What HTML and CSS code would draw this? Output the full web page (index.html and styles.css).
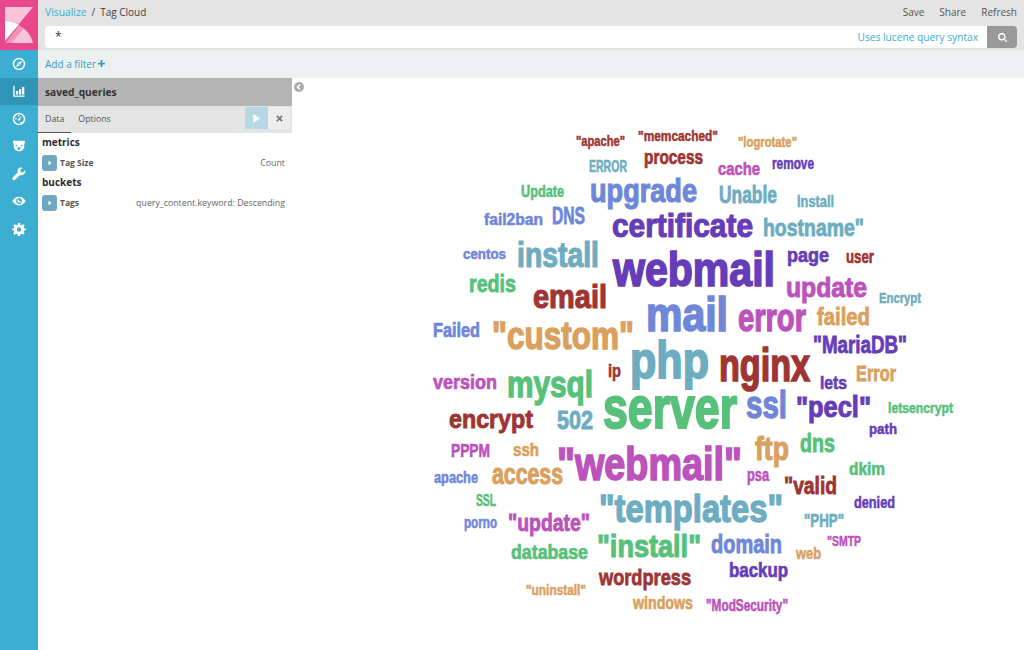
FILE: index.html
```html
<!DOCTYPE html>
<html lang="en">
<head>
<meta charset="utf-8">
<title>Tag Cloud</title>
<link rel="stylesheet" href="styles.css">
</head>
<body>
<nav class="nav">
  <div class="logo">
    <svg width="38" height="50" viewBox="0 0 38 50">
      <path class="lg1" d="M5 7H33L19 24C15 22 10 21 5 21Z"/>
      <path class="lg0" d="M5 21C10 21 15 22 19 24.5L5 41Z"/>
      <path class="lg1" d="M19 25.5C26 29 31 35 33 43H11Z"/>
      <path class="lg2" d="M19 25.5C20.700 26.300 22.200 27.400 23.500 28.500L11.500 43H5.500Z"/>
    </svg>
  </div>
  <a class="nav-item"><svg viewBox="0 0 16 16"><circle class="ol" cx="8" cy="8" r="6.300"/><path class="fl" d="M11.500 4.500 9.400 9.400 4.500 11.500 6.600 6.600ZM8 7a1 1 0 1 0 0 2 1 1 0 0 0 0-2Z"/></svg></a>
  <a class="nav-item on"><svg viewBox="0 0 16 16"><path class="fl" d="M1.500 2H3V13H14.500V14.500H1.500ZM4.500 8H7V12H4.500ZM8 6H10.500V12H8ZM11.500 3.500H14V12H11.500Z"/></svg></a>
  <a class="nav-item"><svg viewBox="0 0 16 16"><circle class="ol" cx="8" cy="8" r="6.300"/><path class="fl" d="M6.500 8.500 11 4.500 9 9.500A1.600 1.600 0 0 1 6.500 8.500ZM3.500 7.500a1 1 0 1 0 2 0 1 1 0 0 0-2 0ZM6.500 4a1 1 0 1 0 2 0 1 1 0 0 0-2 0ZM9.500 12a1 1 0 1 0 2 0 1 1 0 0 0-2 0Z"/></svg></a>
  <a class="nav-item"><svg viewBox="0 0 16 16"><path class="fl" d="M1 3.500A1.800 1.800 0 0 1 3.800 2H12.200A1.800 1.800 0 0 1 15 3.500C15 4.500 14.500 5 14 5.300V8.500C14 12 11 14 8 14S2 12 2 8.500V5.300C1.500 5 1 4.500 1 3.500ZM5 6.500a1 1 0 1 0 0 2 1 1 0 0 0 0-2ZM11 6.500a1 1 0 1 0 0 2 1 1 0 0 0 0-2ZM6 10c0 1.200 1 2.500 2 2.500s2-1.300 2-2.500C10 9.200 6 9.200 6 10Z"/></svg></a>
  <a class="nav-item"><svg viewBox="0 0 16 16"><path class="fl" d="M15 3.800 12.400 6.300 10 5.700 9.500 3.500 12 1C10 .3 8 .9 7 2.300 6.200 3.500 6 5 6.600 6.400L.9 12.100C.2 12.900.2 14 .9 14.700 1.700 15.500 2.800 15.400 3.500 14.700L9.300 9C11 9.700 13 9.200 14.200 7.800 15.200 6.700 15.500 5.200 15 3.800Z"/></svg></a>
  <a class="nav-item"><svg viewBox="0 0 16 16"><path class="fl" d="M8 3C4.500 3 1.800 5.300.5 8 1.800 10.700 4.500 13 8 13S14.200 10.700 15.500 8C14.200 5.300 11.500 3 8 3ZM8 4.700A3.300 3.300 0 1 1 8 11.300 3.300 3.300 0 0 1 8 4.700ZM8 6A2 2 0 1 0 10 8H8Z"/></svg></a>
  <a class="nav-item"><svg viewBox="0 0 16 16"><path class="fl" fill-rule="evenodd" d="M6.800 1H9.200L9.600 3 11.200 3.700 12.900 2.500 14.500 4.100 13.300 5.800 14 7.400 16 7.800V9.200L14 9.600 13.300 11.200 14.500 12.900 12.900 14.500 11.200 13.300 9.600 14 9.200 16H6.800L6.400 14 4.800 13.300 3.100 14.500 1.500 12.900 2.700 11.200 2 9.600 0 9.200V7.800L2 7.400 2.700 5.800 1.500 4.100 3.100 2.500 4.800 3.700 6.400 3ZM8 6A2.500 2.500 0 1 0 8 11 2.500 2.500 0 0 0 8 6Z"/></svg></a>
</nav>
<div class="main">
  <header class="top">
    <div class="crumbs">
      <div class="path"><a class="link">Visualize</a><span class="sep">/</span><span>Tag Cloud</span></div>
      <div class="actions"><span>Save</span><span>Share</span><span>Refresh</span></div>
    </div>
    <div class="query">
      <div class="input"><span class="star">*</span><a class="link">Uses lucene query syntax</a></div>
      <div class="go"><svg viewBox="0 0 16 16"><path class="fl" fill-rule="evenodd" d="M7 1.500A5.500 5.500 0 1 1 7 12.500 5.500 5.500 0 0 1 7 1.500ZM7 3.500A3.500 3.500 0 1 0 7 10.500 3.500 3.500 0 0 0 7 3.500ZM10.500 11.800 11.800 10.500 15 13.700 13.700 15Z"/></svg></div>
    </div>
  </header>
  <div class="filters"><a class="link">Add a filter <svg class="plus" viewBox="0 0 8 8"><path d="M3 0H5V3H8V5H5V8H3V5H0V3H3Z"/></svg></a></div>
  <div class="work">
    <aside class="panel">
      <div class="title">saved_queries</div>
      <div class="tabs">
        <span class="tab active">Data</span><span class="tab">Options</span>
        <div class="btns">
          <span class="play"><svg viewBox="0 0 10 10"><path class="fl" d="M1.500 0 9 5 1.500 10Z"/></svg></span>
          <span class="close"><svg viewBox="0 0 8 8"><path d="M1 1 7 7M7 1 1 7"/></svg></span>
        </div>
      </div>
      <section class="group">
        <h3>metrics</h3>
        <div class="row"><span class="toggle"><svg viewBox="0 0 6 8"><path class="fl" d="M1.500 1.500 4.500 4 1.500 6.500Z"/></svg></span><b>Tag Size</b><span class="val">Count</span></div>
        <h3>buckets</h3>
        <div class="row"><span class="toggle"><svg viewBox="0 0 6 8"><path class="fl" d="M1.500 1.500 4.500 4 1.500 6.500Z"/></svg></span><b>Tags</b><span class="val">query_content.keyword: Descending</span></div>
      </section>
    </aside>
    <div class="vis">
      <svg class="collapse" viewBox="0 0 10 10"><circle cx="5" cy="5" r="5"/><path d="M6 2.500 3.500 5 6 7.500"/></svg>
      <svg class="cloud" viewBox="292 78 732 572">
        <g class="red">
          <text lengthAdjust="spacingAndGlyphs" x="576" y="146" textLength="49" font-size="14">"apache"</text>
          <text lengthAdjust="spacingAndGlyphs" x="638" y="141" textLength="80" font-size="14">"memcached"</text>
          <text lengthAdjust="spacingAndGlyphs" x="644" y="164" textLength="59" font-size="20">process</text>
          <text lengthAdjust="spacingAndGlyphs" x="533" y="308" textLength="74" font-size="34">email</text>
          <text lengthAdjust="spacingAndGlyphs" x="719" y="381" textLength="91" font-size="47">nginx</text>
          <text lengthAdjust="spacingAndGlyphs" x="608" y="377" textLength="13" font-size="18">ip</text>
          <text lengthAdjust="spacingAndGlyphs" x="449" y="428" textLength="84" font-size="26">encrypt</text>
          <text lengthAdjust="spacingAndGlyphs" x="599" y="585" textLength="92" font-size="22">wordpress</text>
          <text lengthAdjust="spacingAndGlyphs" x="846" y="263" textLength="28" font-size="18">user</text>
          <text lengthAdjust="spacingAndGlyphs" x="784" y="494" textLength="53" font-size="24">"valid</text>
        </g>
        <g class="teal">
          <text lengthAdjust="spacingAndGlyphs" x="589" y="172" textLength="38" font-size="17">ERROR</text>
          <text lengthAdjust="spacingAndGlyphs" x="517" y="267" textLength="82" font-size="35">install</text>
          <text lengthAdjust="spacingAndGlyphs" x="630" y="378" textLength="79" font-size="52">php</text>
          <text lengthAdjust="spacingAndGlyphs" x="557" y="429" textLength="36" font-size="25">502</text>
          <text lengthAdjust="spacingAndGlyphs" x="599" y="522" textLength="184" font-size="39">"templates"</text>
          <text lengthAdjust="spacingAndGlyphs" x="719" y="203" textLength="58" font-size="23">Unable</text>
          <text lengthAdjust="spacingAndGlyphs" x="797" y="207" textLength="37" font-size="16">Install</text>
          <text lengthAdjust="spacingAndGlyphs" x="763" y="236" textLength="101" font-size="24">hostname"</text>
          <text lengthAdjust="spacingAndGlyphs" x="879" y="303" textLength="42" font-size="14">Encrypt</text>
          <text lengthAdjust="spacingAndGlyphs" x="804" y="527" textLength="40" font-size="18">"PHP"</text>
        </g>
        <g class="green">
          <text lengthAdjust="spacingAndGlyphs" x="521" y="197" textLength="43" font-size="16">Update</text>
          <text lengthAdjust="spacingAndGlyphs" x="469" y="292" textLength="47" font-size="23">redis</text>
          <text lengthAdjust="spacingAndGlyphs" x="507" y="397" textLength="86" font-size="37">mysql</text>
          <text lengthAdjust="spacingAndGlyphs" x="603" y="428" textLength="134" font-size="60">server</text>
          <text lengthAdjust="spacingAndGlyphs" x="476" y="506" textLength="20" font-size="17">SSL</text>
          <text lengthAdjust="spacingAndGlyphs" x="511" y="559" textLength="77" font-size="20">database</text>
          <text lengthAdjust="spacingAndGlyphs" x="597" y="557" textLength="104" font-size="32">"install"</text>
          <text lengthAdjust="spacingAndGlyphs" x="888" y="413" textLength="65" font-size="15">letsencrypt</text>
          <text lengthAdjust="spacingAndGlyphs" x="800" y="452" textLength="35" font-size="25">dns</text>
          <text lengthAdjust="spacingAndGlyphs" x="849" y="475" textLength="36" font-size="19">dkim</text>
        </g>
        <g class="blue">
          <text lengthAdjust="spacingAndGlyphs" x="590" y="202" textLength="107" font-size="33">upgrade</text>
          <text lengthAdjust="spacingAndGlyphs" x="484" y="225" textLength="59" font-size="17">fail2ban</text>
          <text lengthAdjust="spacingAndGlyphs" x="552" y="224" textLength="33" font-size="24">DNS</text>
          <text lengthAdjust="spacingAndGlyphs" x="463" y="259" textLength="43" font-size="15">centos</text>
          <text lengthAdjust="spacingAndGlyphs" x="646" y="331" textLength="82" font-size="48">mail</text>
          <text lengthAdjust="spacingAndGlyphs" x="433" y="337" textLength="47" font-size="21">Failed</text>
          <text lengthAdjust="spacingAndGlyphs" x="746" y="418" textLength="41" font-size="38">ssl</text>
          <text lengthAdjust="spacingAndGlyphs" x="434" y="483" textLength="44" font-size="16">apache</text>
          <text lengthAdjust="spacingAndGlyphs" x="464" y="528" textLength="33" font-size="16">porno</text>
          <text lengthAdjust="spacingAndGlyphs" x="711" y="553" textLength="71" font-size="25">domain</text>
        </g>
        <g class="violet">
          <text lengthAdjust="spacingAndGlyphs" x="612" y="237" textLength="141" font-size="33">certificate</text>
          <text lengthAdjust="spacingAndGlyphs" x="613" y="286" textLength="162" font-size="49">webmail</text>
          <text lengthAdjust="spacingAndGlyphs" x="772" y="169" textLength="42" font-size="17">remove</text>
          <text lengthAdjust="spacingAndGlyphs" x="787" y="262" textLength="42" font-size="21">page</text>
          <text lengthAdjust="spacingAndGlyphs" x="813" y="353" textLength="94" font-size="24">"MariaDB"</text>
          <text lengthAdjust="spacingAndGlyphs" x="820" y="389" textLength="27" font-size="19">lets</text>
          <text lengthAdjust="spacingAndGlyphs" x="796" y="417" textLength="75" font-size="29">"pecl"</text>
          <text lengthAdjust="spacingAndGlyphs" x="869" y="434" textLength="28" font-size="15">path</text>
          <text lengthAdjust="spacingAndGlyphs" x="854" y="508" textLength="41" font-size="16">denied</text>
          <text lengthAdjust="spacingAndGlyphs" x="729" y="577" textLength="59" font-size="20">backup</text>
        </g>
        <g class="pink">
          <text lengthAdjust="spacingAndGlyphs" x="718" y="175" textLength="42" font-size="19">cache</text>
          <text lengthAdjust="spacingAndGlyphs" x="786" y="297" textLength="81" font-size="28">update</text>
          <text lengthAdjust="spacingAndGlyphs" x="738" y="331" textLength="68" font-size="38">error</text>
          <text lengthAdjust="spacingAndGlyphs" x="433" y="389" textLength="64" font-size="20">version</text>
          <text lengthAdjust="spacingAndGlyphs" x="451" y="457" textLength="39" font-size="19">PPPM</text>
          <text lengthAdjust="spacingAndGlyphs" x="557" y="480" textLength="185" font-size="47">"webmail"</text>
          <text lengthAdjust="spacingAndGlyphs" x="747" y="481" textLength="22" font-size="18">psa</text>
          <text lengthAdjust="spacingAndGlyphs" x="508" y="531" textLength="82" font-size="23">"update"</text>
          <text lengthAdjust="spacingAndGlyphs" x="827" y="546" textLength="34" font-size="14">"SMTP</text>
          <text lengthAdjust="spacingAndGlyphs" x="706" y="611" textLength="82" font-size="16">"ModSecurity"</text>
        </g>
        <g class="orange">
          <text lengthAdjust="spacingAndGlyphs" x="738" y="147" textLength="59" font-size="14">"logrotate"</text>
          <text lengthAdjust="spacingAndGlyphs" x="492" y="349" textLength="142" font-size="39">"custom"</text>
          <text lengthAdjust="spacingAndGlyphs" x="817" y="325" textLength="53" font-size="23">failed</text>
          <text lengthAdjust="spacingAndGlyphs" x="856" y="381" textLength="40" font-size="22">Error</text>
          <text lengthAdjust="spacingAndGlyphs" x="513" y="456" textLength="26" font-size="19">ssh</text>
          <text lengthAdjust="spacingAndGlyphs" x="755" y="460" textLength="34" font-size="33">ftp</text>
          <text lengthAdjust="spacingAndGlyphs" x="492" y="484" textLength="71" font-size="29">access</text>
          <text lengthAdjust="spacingAndGlyphs" x="796" y="559" textLength="25" font-size="17">web</text>
          <text lengthAdjust="spacingAndGlyphs" x="526" y="595" textLength="60" font-size="14">"uninstall"</text>
          <text lengthAdjust="spacingAndGlyphs" x="633" y="609" textLength="60" font-size="18">windows</text>
        </g>
      </svg>
    </div>
  </div>
</div>
</body>
</html>
```
FILE: styles.css
```css
* { box-sizing: border-box; }
html, body { height: 100%; }
body {
  margin: 0;
  display: flex;
  height: 650px;
  overflow: hidden;
  background: #fff;
  color: #3f3f3f;
  font: 10px/1.2 "Open Sans", "Liberation Sans", sans-serif;
}
.fl { fill: #fff; }
.ol { fill: none; stroke: #fff; stroke-width: 1.7; }

.nav { width: 38px; flex: none; background: #3caed2; display: flex; flex-direction: column; }
.logo { height: 50px; background: #e8488b; }
.logo svg { display: block; }
.lg0 { fill: #fff; }
.lg1 { fill: #f9c3da; }
.lg2 { fill: #f391b9; }
.nav-item { height: 27.500px; display: flex; align-items: center; justify-content: center; }
.nav-item svg { width: 14px; height: 14px; display: block; }
.nav-item.on { background: #3094b6; }

.main { flex: 1; min-width: 0; display: flex; flex-direction: column; }
.top { height: 50px; background: #e4e4e4; padding: 0 7px; }
.crumbs { height: 26px; display: flex; justify-content: space-between; align-items: center; padding-bottom: 2px; }
.path { display: flex; gap: 5px; }
.path .link { font-size: 10.300px; }
.link { color: #3caed2; }
.actions { display: flex; gap: 15px; color: #555; }
.query { display: flex; height: 22px; }
.input {
  flex: 1;
  background: #fff;
  border-radius: 4px 0 0 4px;
  display: flex;
  justify-content: space-between;
  align-items: center;
  padding: 0 9px 0 10px;
}
.input .link { font-size: 10.200px; }
.star { color: #333; font-size: 12px; }
.go { width: 30px; background: #999; border-radius: 0 4px 4px 0; display: flex; align-items: center; justify-content: center; }
.go svg { width: 11px; height: 11px; }
.filters { height: 28px; background: #ecf0f1; padding: 0 7px 1px; display: flex; align-items: center; }
.filters .link { color: #3a9cbd; display: flex; align-items: center; gap: 2px; }
.plus { width: 7px; height: 7px; fill: #3a9cbd; }

.work { flex: 1; display: flex; min-height: 0; }
.panel { width: 254px; flex: none; }
.title { height: 28px; background: #b4b4b4; padding: 0 7px; display: flex; align-items: center; font-weight: 700; color: #333; font-size: 10.200px; }
.tabs { height: 27px; background: #e4e4e4; display: flex; align-items: center; font-size: 8.800px; }
.tab { height: 27px; padding: 0 7px; display: flex; align-items: center; color: #555; }
.tab.active { border-bottom: 1.500px solid #555; }
.btns { margin-left: auto; margin-right: 2px; display: flex; height: 22px; margin-top: -3px; }
.play { width: 23px; background: #b5d8e4; border-radius: 3px 0 0 3px; display: flex; align-items: center; justify-content: center; }
.play svg { width: 9px; height: 9px; }
.close { width: 22px; background: #ededed; border-radius: 0 3px 3px 0; display: flex; align-items: center; justify-content: center; }
.close svg { width: 7px; height: 7px; }
.close path { stroke: #777; stroke-width: 2; fill: none; }
.group { padding: 3px 7px 0 4px; }
.group h3 { margin: 0; height: 13px; font-size: 10px; line-height: 13px; font-weight: 700; color: #2d2d2d; }
.row { height: 27px; padding-top: 1px; display: flex; align-items: center; font-size: 8.800px; color: #666; }
.row b { color: #555; margin-left: 3px; font-size: 8.500px; }
.val { margin-left: auto; }
.toggle { width: 15px; height: 16px; background: #70a9bf; border-radius: 3px; display: flex; align-items: center; justify-content: center; }
.toggle svg { width: 6px; height: 8px; }

.vis { flex: 1; position: relative; }
.collapse { position: absolute; left: 2px; top: 4px; width: 10px; height: 10px; }
.collapse circle { fill: #aaa; }
.collapse path { fill: none; stroke: #fff; stroke-width: 1.600; }
.cloud { display: block; width: 732px; height: 572px; }
.cloud text {
  font-family: "Liberation Sans", Arial, sans-serif;
  font-weight: 700;
  stroke-width: .035em;
}
.red { fill: #9e3533; stroke: #9e3533; }
.teal { fill: #6eadc1; stroke: #6eadc1; }
.green { fill: #57c17b; stroke: #57c17b; }
.blue { fill: #6f87d8; stroke: #6f87d8; }
.violet { fill: #663db8; stroke: #663db8; }
.pink { fill: #bc52bc; stroke: #bc52bc; }
.orange { fill: #daa05d; stroke: #daa05d; }
```
